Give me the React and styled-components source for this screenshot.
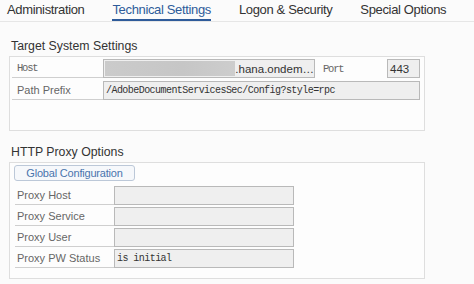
import React from "react";
import styled, { createGlobalStyle } from "styled-components";

const GlobalStyle = createGlobalStyle`
  html, body {
    margin: 0;
    padding: 0;
    background: #fafafa;
    font-family: "Liberation Sans", Arial, sans-serif;
  }
`;

const Page = styled.div`
  width: 474px;
  height: 284px;
  overflow: hidden;
  background: #fbfbfb;
`;

const TabBar = styled.div`
  display: flex;
  gap: 28px;
  height: 21px;
  padding-left: 7px;
  border-bottom: 1px solid #e6e6e6;
  background: #fbfbfb;
`;

const Tab = styled.div`
  height: 19px;
  line-height: 19px;
  font-size: 13px;
  letter-spacing: -0.35px;
  color: ${(p) => (p.$active ? "#2e5b9a" : "#333")};
  border-bottom: 2px solid ${(p) => (p.$active ? "#2e5b9a" : "transparent")};
  white-space: nowrap;
`;

const Content = styled.div`
  padding: 16px 49px 0 9px;
`;

const Heading = styled.div`
  height: 18px;
  line-height: 16px;
  font-size: 12.3px;
  color: #333;
  padding-left: 2px;
  margin-top: ${(p) => p.$top || 0}px;
`;

const Box = styled.div`
  border: 1px solid #dedede;
  background: #fdfdfd;
  height: ${(p) => p.$height}px;
  box-sizing: border-box;
  padding: ${(p) => p.$padding};
`;

const TargetGrid = styled.div`
  display: grid;
  grid-template-columns: 91px 212px 8px 64px 33px;
  grid-auto-rows: 19px;
  row-gap: 3px;
`;

const Label = styled.div`
  display: flex;
  align-items: center;
  padding-left: ${(p) => p.$pad ?? 5}px;
  border-bottom: ${(p) => (p.$line ? "1px solid #cfcfcf" : "none")};
  color: #666;
  font-size: 11px;
  white-space: nowrap;
  ${(p) =>
    p.$mono &&
    `font-family: "Liberation Mono", "DejaVu Sans Mono", monospace;
     font-size: 10.5px;
     letter-spacing: -1.2px;`}
`;

const Input = styled.div`
  display: flex;
  align-items: center;
  box-sizing: border-box;
  border: 1px solid #b9b9b9;
  background: #efefef;
  color: #333;
  padding-left: 2px;
  overflow: hidden;
  white-space: nowrap;
  grid-column: ${(p) => p.$span || "auto"};
  font-size: 11.5px;
  ${(p) =>
    p.$mono &&
    `font-family: "Liberation Mono", "DejaVu Sans Mono", monospace;
     font-size: 10px;
     letter-spacing: -0.55px;`}
`;

const Blurred = styled.span`
  align-self: stretch;
  width: 138px;
  margin: 1px 0 1px -1px;
  background: linear-gradient(90deg, #cbcbcb, #c6c6c6 60%, #cdcdcd);
  filter: blur(0.6px);
`;

const GlobalButton = styled.button`
  display: block;
  height: 16px;
  width: 121px;
  padding: 0;
  margin: 0 0 5px 0;
  border: 1px solid #bcc8d8;
  border-radius: 3px;
  background: #f6f8fb;
  color: #4a74ad;
  font-family: "Liberation Sans", Arial, sans-serif;
  font-size: 11px;
  letter-spacing: -0.2px;
  line-height: 14px;
`;

const ProxyGrid = styled.div`
  display: grid;
  grid-template-columns: 99px 180px;
  grid-auto-rows: 19px;
  row-gap: 2px;
  padding-left: 1px;
`;

export default function App() {
  return (
    <Page>
      <GlobalStyle />
      <TabBar>
        <Tab>Administration</Tab>
        <Tab $active>Technical Settings</Tab>
        <Tab>Logon &amp; Security</Tab>
        <Tab>Special Options</Tab>
      </TabBar>
      <Content>
        <Heading>Target System Settings</Heading>
        <Box $height={75} $padding="2px 0 0 2px">
          <TargetGrid>
            <Label $mono $line>Host</Label>
            <Input>
              <Blurred />
              <span>.hana.ondem…</span>
            </Input>
            <span />
            <Label $mono $pad={0}>Port</Label>
            <Input>443</Input>
            <Label $line>Path Prefix</Label>
            <Input $mono $span="2 / 6">
              /AdobeDocumentServicesSec/Config?style=rpc
            </Input>
          </TargetGrid>
        </Box>
        <Heading $top={13}>HTTP Proxy Options</Heading>
        <Box $height={117} $padding="2px 0 0 4px">
          <GlobalButton>Global Configuration</GlobalButton>
          <ProxyGrid>
            <Label $line $pad={2}>Proxy Host</Label>
            <Input />
            <Label $line $pad={2}>Proxy Service</Label>
            <Input />
            <Label $line $pad={2}>Proxy User</Label>
            <Input />
            <Label $line $pad={2}>Proxy PW Status</Label>
            <Input $mono>is initial</Input>
          </ProxyGrid>
        </Box>
      </Content>
    </Page>
  );
}
